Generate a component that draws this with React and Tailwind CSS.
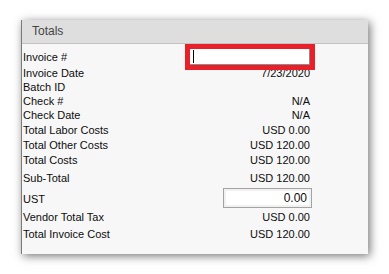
import React from "react";

const rows = [
  { label: "Invoice Date", value: "7/23/2020", h: "h-[14px]" },
  { label: "Batch ID", value: "", h: "h-[14px]" },
  { label: "Check #", value: "N/A", h: "h-[14px]" },
  { label: "Check Date", value: "N/A", h: "h-[14px]" },
  { label: "Total Labor Costs", value: "USD 0.00", h: "h-[15px]" },
  { label: "Total Other Costs", value: "USD 120.00", h: "h-[15px]" },
  { label: "Total Costs", value: "USD 120.00", h: "h-[15px]" },
  { label: "Sub-Total", value: "USD 120.00", h: "h-[21px] pt-[1px]" },
];

function Row({ label, value, h }) {
  return (
    <div className={`flex items-center justify-between leading-[14px] ${h}`}>
      <span>{label}</span>
      <span>{value}</span>
    </div>
  );
}

export default function App() {
  return (
    <div className="w-[389px] h-[274px] bg-white pt-[20px] pl-[21px]" style={{ fontFamily: '"Liberation Sans", Arial, sans-serif' }}>
      <div className="w-[347px] h-[234px] bg-[#f7f7f7] border-l border-[#7a7a7a] shadow-[2px_2px_9px_rgba(0,0,0,0.55)] flex flex-col">
        <div className="h-[24px] bg-[#dedede] border-b-[1px] border-[#c2c2c2] flex items-center pl-[10px] text-[12px] text-[#444] leading-[14px] pb-[1px]">
          Totals
        </div>
        <div className="pl-[1px] pr-[58px] pt-[5px] text-[11px] text-[#0d0d0d]">
          <div className="flex items-start justify-between h-[17px] leading-[14px]">
            <span className="pt-[1px]">Invoice #</span>
            <div className="relative z-10 w-[120px] h-[16px] bg-white border-r border-b border-[#8c8c8c] outline-[5px] outline-solid outline-[#e8202a] flex items-center pl-[3px]">
              <div className="w-[1px] h-[13px] bg-black"></div>
            </div>
          </div>
          {rows.map((r) => (
            <Row key={r.label} {...r} />
          ))}
          <div className="flex justify-between h-[21px] leading-[14px]">
            <span className="self-center">UST</span>
            <div className="w-[89px] h-[20px] -mr-[2px] bg-white border border-[#a3a3a3] shadow-[inset_0_0_0_2px_#f1f1f1] flex items-center justify-end pr-[4px] text-[12px]">
              0.00
            </div>
          </div>
          <Row label="Vendor Total Tax" value="USD 0.00" h="h-[16px]" />
          <Row label="Total Invoice Cost" value="USD 120.00" h="h-[18px]" />
        </div>
      </div>
    </div>
  );
}
